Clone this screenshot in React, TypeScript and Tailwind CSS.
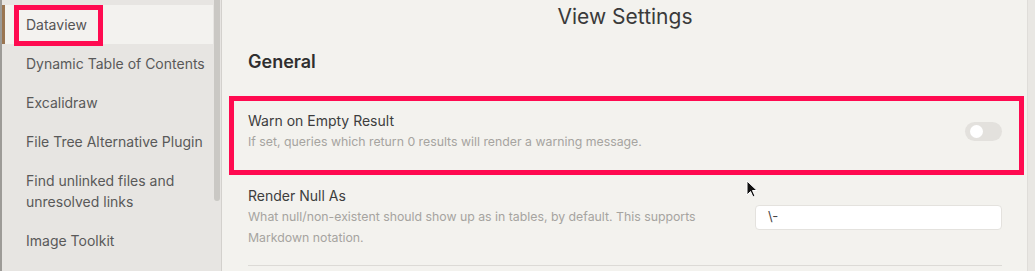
import React from 'react';

const plugins = [
  { name: 'Dataview', active: true },
  { name: 'Dynamic Table of Contents' },
  { name: 'Excalidraw' },
  { name: 'File Tree Alternative Plugin' },
  { name: 'Find unlinked files and unresolved links' },
  { name: 'Image Toolkit' },
];

const Cursor: React.FC = () => (
  <svg className="absolute left-[746px] top-[180px]" width="12" height="19" viewBox="0 0 12 19">
    <path d="M1 1 L1 15 L4.5 11.5 L7 17 L9 16 L6.5 10.5 L11 10.5 Z" fill="#111" stroke="#fff" strokeWidth="1" strokeLinejoin="round" />
  </svg>
);

const App: React.FC = () => {
  return (
    <div className="relative flex h-[271px] w-[1035px] overflow-hidden bg-[#f3f2ee] font-['Inter',sans-serif]">
      <aside className="flex shrink-0 border-l-2 border-[#9d9b97] bg-[#e7e5e2]">
        <nav className="w-[211px] pt-[5px]">
          {plugins.map((p) =>
            p.active ? (
              <div
                key={p.name}
                className="relative border-l-[3px] border-[#9a7551] bg-[#f3f2ef] py-[9px] pl-[21px] text-[14px] leading-[21px] text-[#555]"
              >
                {p.name}
                <span className="absolute left-[9px] top-0 h-[41px] w-[89px] border-[5px] border-[#ff0a50]" />
              </div>
            ) : (
              <div key={p.name} className="py-[9px] pl-[24px] pr-[4px] text-[14px] leading-[21px] text-[#595959]">
                {p.name}
              </div>
            )
          )}
        </nav>
        <div className="w-[8px] pl-[1px]">
          <div className="h-[201px] w-[6px] rounded-b-full bg-[#cac8c4]" />
        </div>
        <div className="w-px bg-[#d3d1cd]" />
      </aside>

      <main className="flex flex-1 flex-col pl-[26px] pr-[25px]">
        <h1 className="flex h-[34px] items-center justify-center text-[21px] font-normal text-[#3a3a3a]">
          View Settings
        </h1>
        <h2 className="mt-[16px] text-[18px] font-semibold leading-[24px] text-[#2f2f2f]">General</h2>

        <div className="-ml-[19px] -mr-[22px] mt-[22px] flex items-center border-[5px] border-[#ff0a50] pb-[18px] pl-[14px] pr-[17px] pt-[10px]">
          <div className="flex-1">
            <div className="text-[14px] leading-[20px] text-[#3d3d3d]">Warn on Empty Result</div>
            <div className="text-[12.3px] leading-[21px] text-[#a6a4a0]">
              If set, queries which return 0 results will render a warning message.
            </div>
          </div>
          <div className="relative h-[19px] w-[37px] rounded-full bg-[#e3e1dd]">
            <span className="absolute left-[5px] top-[3px] h-[13px] w-[13px] rounded-full bg-white" />
          </div>
        </div>

        <div className="mt-[11px] flex items-center">
          <div className="mr-[40px] flex-1">
            <div className="text-[14px] leading-[20px] text-[#3d3d3d]">Render Null As</div>
            <div className="text-[12.3px] leading-[21px] text-[#a6a4a0]">
              What null/non-existent should show up as in tables, by default. This supports Markdown notation.
            </div>
          </div>
          <div className="flex h-[25px] w-[247px] items-center rounded-[4px] border border-[#e4e2de] bg-white pl-[12px] text-[13px] text-[#444]">
            \-
          </div>
        </div>

        <div className="mt-[17px] h-px bg-[#dcdad6]" />
      </main>

      <div className="w-[8px] shrink-0 border-l border-[#dfddd9] bg-[#e9e7e3]" />

      <Cursor />
    </div>
  );
};

export default App;
